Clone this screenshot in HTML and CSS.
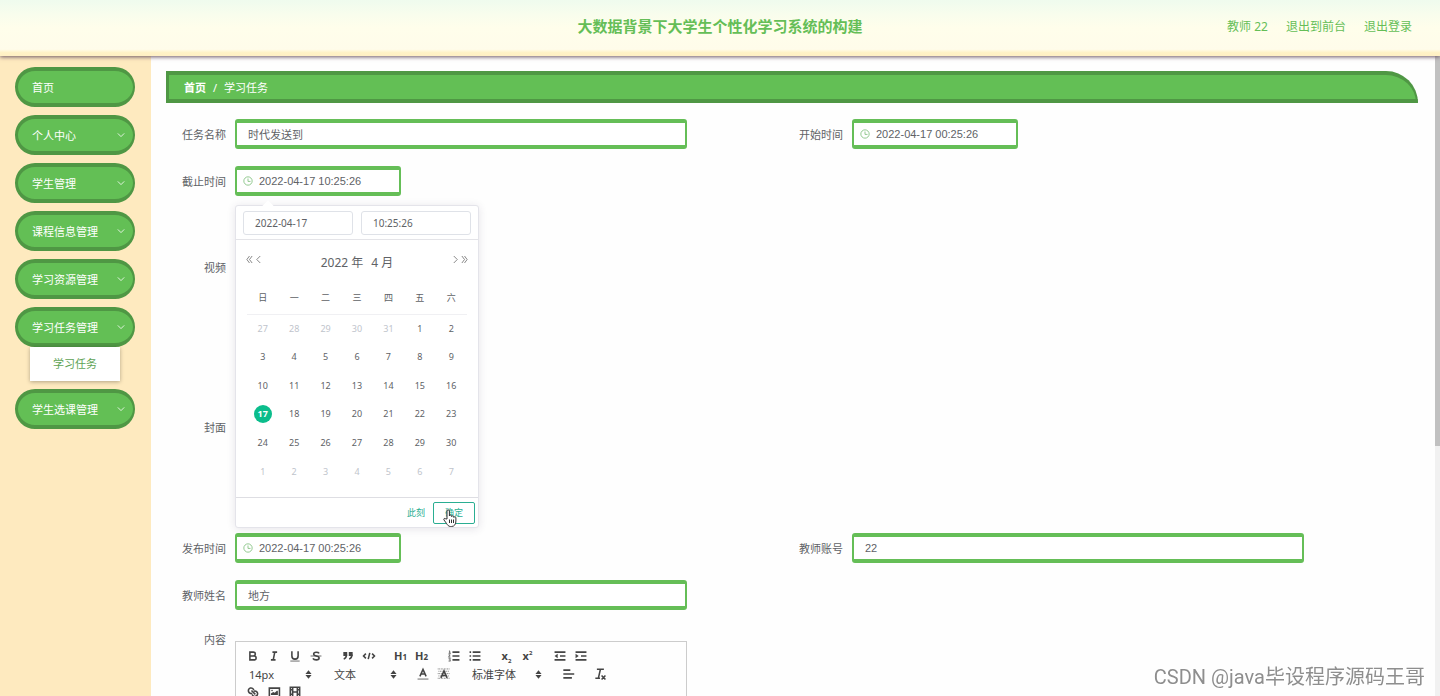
FILE: index.html
```html
<!DOCTYPE html>
<html lang="zh-CN">
<head>
    <meta charset="UTF-8">
    <meta name="viewport" content="width=device-width, initial-scale=1.0">
    <title>大数据背景下大学生个性化学习系统的构建</title>
    <link rel="stylesheet" href="styles.css">
</head>
<body>
    <!-- 公用图标 -->
    <svg class="sprite" aria-hidden="true">
        <symbol id="i-down" viewBox="0 0 10 10"><path d="M1 3l4 4 4-4"/></symbol>
        <symbol id="i-clock" viewBox="0 0 12 12"><circle cx="6" cy="6" r="5"/><path d="M6 3v3.5h3"/></symbol>
        <symbol id="i-sort" viewBox="0 0 18 18"><path d="M4 8l5-6 5 6zM4 10l5 6 5-6z"/></symbol>
    </svg>

    <header class="header">
        <h1>大数据背景下大学生个性化学习系统的构建</h1>
        <nav class="header-nav">
            <span>教师 22</span>
            <a href="#">退出到前台</a>
            <a href="#">退出登录</a>
        </nav>
    </header>

    <div class="layout">
        <aside class="sidebar">
            <a class="menu-item" href="#">首页</a>
            <button type="button" class="menu-item">个人中心<svg class="arrow"><use href="#i-down"/></svg></button>
            <button type="button" class="menu-item">学生管理<svg class="arrow"><use href="#i-down"/></svg></button>
            <button type="button" class="menu-item">课程信息管理<svg class="arrow"><use href="#i-down"/></svg></button>
            <button type="button" class="menu-item">学习资源管理<svg class="arrow"><use href="#i-down"/></svg></button>
            <div class="menu-group">
                <button type="button" class="menu-item">学习任务管理<svg class="arrow"><use href="#i-down"/></svg></button>
                <a class="submenu-item" href="#">学习任务</a>
            </div>
            <button type="button" class="menu-item">学生选课管理<svg class="arrow"><use href="#i-down"/></svg></button>
        </aside>

        <main class="main">
            <nav class="breadcrumb">
                <a href="#">首页</a><span class="sep">/</span><span>学习任务</span>
            </nav>

            <form class="form">
                <div class="field">
                    <label for="name">任务名称</label>
                    <input class="control" id="name" type="text" value="时代发送到">
                </div>
                <div class="field">
                    <label for="start">开始时间</label>
                    <div class="date-box">
                        <svg class="clock"><use href="#i-clock"/></svg>
                        <input class="control" id="start" type="text" value="2022-04-17 00:25:26">
                    </div>
                </div>

                <div class="field first">
                    <label for="end">截止时间</label>
                    <div class="date-box">
                        <svg class="clock"><use href="#i-clock"/></svg>
                        <input class="control" id="end" type="text" value="2022-04-17 10:25:26">

                        <div class="picker">
                            <div class="picker-inputs">
                                <input type="text" aria-label="日期" value="2022-04-17">
                                <input type="text" aria-label="时间" value="10:25:26">
                            </div>
                            <div class="picker-body">
                                <div class="picker-head">
                                    <button type="button" aria-label="前一年"><svg viewBox="0 0 8 10"><path d="M4 1L1 5l3 4M7 1L4 5l3 4"/></svg></button>
                                    <button type="button" aria-label="上个月"><svg viewBox="0 0 8 10"><path d="M6 1L2 5l4 4"/></svg></button>
                                    <span class="picker-title"><span>2022 年</span><span>4 月</span></span>
                                    <button type="button" aria-label="下个月"><svg viewBox="0 0 8 10"><path d="M2 1l4 4-4 4"/></svg></button>
                                    <button type="button" aria-label="后一年"><svg viewBox="0 0 8 10"><path d="M1 1l3 4-3 4M4 1l3 4-3 4"/></svg></button>
                                </div>
                                <table class="days">
                                    <thead>
                                        <tr><th>日</th><th>一</th><th>二</th><th>三</th><th>四</th><th>五</th><th>六</th></tr>
                                    </thead>
                                    <tbody>
                                        <tr><td class="off">27</td><td class="off">28</td><td class="off">29</td><td class="off">30</td><td class="off">31</td><td>1</td><td>2</td></tr>
                                        <tr><td>3</td><td>4</td><td>5</td><td>6</td><td>7</td><td>8</td><td>9</td></tr>
                                        <tr><td>10</td><td>11</td><td>12</td><td>13</td><td>14</td><td>15</td><td>16</td></tr>
                                        <tr><td><span class="current">17</span></td><td>18</td><td>19</td><td>20</td><td>21</td><td>22</td><td>23</td></tr>
                                        <tr><td>24</td><td>25</td><td>26</td><td>27</td><td>28</td><td>29</td><td>30</td></tr>
                                        <tr><td class="off">1</td><td class="off">2</td><td class="off">3</td><td class="off">4</td><td class="off">5</td><td class="off">6</td><td class="off">7</td></tr>
                                    </tbody>
                                </table>
                            </div>
                            <div class="picker-footer">
                                <button type="button" class="btn-now">此刻</button>
                                <button type="button" class="btn-ok">确定</button>
                            </div>
                            <svg class="cursor" viewBox="0 0 14 18"><path d="M4 10V2C4 .5 6.400 .5 6.400 2V7c0-1.200 2-1.200 2.200 0v.6c.2-1.100 2-1 2.200 .2v.6c.3-.9 2-.7 2.100 .4V12c0 3-1.400 5.500-4.400 5.500H7.500c-2 0-3-1.500-3.800-2.800L1 11c-.8-1.300 .8-2.200 1.700-1.200z"/><path d="M6.500 10.500V14M8.500 10.500V14M10.500 10.500V14"/></svg>
                        </div>
                    </div>
                </div>

                <div class="field wide video">
                    <label>视频</label>
                </div>
                <div class="field wide cover">
                    <label>封面</label>
                </div>

                <div class="field">
                    <label for="publish">发布时间</label>
                    <div class="date-box">
                        <svg class="clock"><use href="#i-clock"/></svg>
                        <input class="control" id="publish" type="text" value="2022-04-17 00:25:26">
                    </div>
                </div>
                <div class="field">
                    <label for="account">教师账号</label>
                    <input class="control" id="account" type="text" value="22">
                </div>

                <div class="field first">
                    <label for="teacher">教师姓名</label>
                    <input class="control" id="teacher" type="text" value="地方">
                </div>

                <div class="field first content">
                    <label for="editor">内容</label>
                    <div class="editor">
                        <div class="toolbar">
                            <span class="group">
                                <button type="button" aria-label="粗体"><svg viewBox="0 0 18 18"><path d="M5 4h4.500a2.500 2.500 0 0 1 0 5H5zM5 9h5.500a2.500 2.500 0 0 1 0 5H5z"/></svg></button>
                                <button type="button" aria-label="斜体"><svg viewBox="0 0 18 18"><path d="M7 4h6M5 14h6M8 14l2-10"/></svg></button>
                                <button type="button" aria-label="下划线"><svg viewBox="0 0 18 18"><path d="M5 3v6a4 4 0 0 0 8 0V3"/><path class="thin" d="M3 15.500h12"/></svg></button>
                                <button type="button" aria-label="删除线"><svg viewBox="0 0 18 18"><path class="thin" d="M2 9h14"/><path d="M13 5.500C12 3.800 6 3.300 6 6.300c0 3.500 7 1.700 7 5.200 0 3.200-6.500 3.200-8 .5"/></svg></button>
                            </span>
                            <span class="group">
                                <button type="button" aria-label="引用"><svg viewBox="0 0 18 18"><path class="fill" d="M3 4h5v5H3zM10 4h5v5h-5z"/><path d="M7 7c0 3-1 5-3.500 6M14 7c0 3-1 5-3.500 6"/></svg></button>
                                <button type="button" aria-label="代码"><svg viewBox="0 0 18 18"><path d="M5 6L2 9l3 3M13 6l3 3-3 3M10 5L8 13"/></svg></button>
                            </span>
                            <span class="group">
                                <button type="button" aria-label="标题1"><b>H<small>1</small></b></button>
                                <button type="button" aria-label="标题2"><b>H<small>2</small></b></button>
                            </span>
                            <span class="group">
                                <button type="button" aria-label="有序列表"><svg viewBox="0 0 18 18"><path d="M7 4h9M7 9h9M7 14h9"/><path class="thin" d="M2.500 2.500h1v3M2 5.500h3M2 7.500h2l-2 3h2.500M2 12.500h2.500l-1 1.500 1 1.500H2"/></svg></button>
                                <button type="button" aria-label="无序列表"><svg viewBox="0 0 18 18"><path d="M6 4h10M6 9h10M6 14h10M2 4h2M2 9h2M2 14h2"/></svg></button>
                            </span>
                            <span class="group">
                                <button type="button" aria-label="下标"><b>x<sub>2</sub></b></button>
                                <button type="button" aria-label="上标"><b>x<sup>2</sup></b></button>
                            </span>
                            <span class="group">
                                <button type="button" aria-label="减少缩进"><svg viewBox="0 0 18 18"><path d="M2 4h14M9 9h7M2 14h14"/><path class="fill" d="M6 6v6L2 9z"/></svg></button>
                                <button type="button" aria-label="增加缩进"><svg viewBox="0 0 18 18"><path d="M2 4h14M9 9h7M2 14h14"/><path class="fill" d="M2 6v6l4-3z"/></svg></button>
                            </span>
                            <span class="group select">
                                <select aria-label="字号"><option>14px</option></select>
                                <svg class="sort"><use href="#i-sort"/></svg>
                            </span>
                            <span class="group select">
                                <select aria-label="标题"><option>文本</option></select>
                                <svg class="sort"><use href="#i-sort"/></svg>
                            </span>
                            <span class="group">
                                <button type="button" aria-label="文字颜色"><svg viewBox="0 0 18 18"><path class="thin" d="M2 15.500h14"/><path d="M5 12l4-9 4 9M6.500 9h5"/></svg></button>
                                <button type="button" aria-label="背景颜色"><svg viewBox="0 0 18 18"><path class="dots" d="M1 2.500h16M2 5.500h14M1 8.500h16M2 11.500h14M1 14.500h16"/><path d="M5 14l4-9 4 9M6.500 11h5"/></svg></button>
                            </span>
                            <span class="group select font">
                                <select aria-label="字体"><option>标准字体</option></select>
                                <svg class="sort"><use href="#i-sort"/></svg>
                            </span>
                            <span class="group">
                                <button type="button" aria-label="对齐"><svg viewBox="0 0 18 18"><path d="M3 4h9M3 9h14M3 14h11"/></svg></button>
                            </span>
                            <span class="group">
                                <button type="button" aria-label="清除格式"><svg viewBox="0 0 18 18"><path d="M5 3h9M9.500 3L7 14M3 14.500h6M11 11l5 5M16 11l-5 5"/></svg></button>
                            </span>
                            <span class="group">
                                <button type="button" aria-label="链接"><svg viewBox="0 0 18 18"><path d="M7 7l5 5M8 10.500a3.500 3.500 0 1 1 2-4M10 8a3.500 3.500 0 1 1-2 4"/></svg></button>
                                <button type="button" aria-label="图片"><svg viewBox="0 0 18 18"><path d="M3 4h13v11H3z"/><path class="fill" d="M5 13v-2l3-2 2 1 3-3 1 1v5z"/><circle class="fill" cx="6.500" cy="7" r="1"/></svg></button>
                                <button type="button" aria-label="视频"><svg viewBox="0 0 18 18"><path d="M3 3h12v12H3zM6 3v12M12 3v12M6 9h6M3 6h3M3 12h3M12 6h3M12 12h3"/></svg></button>
                            </span>
                        </div>
                        <textarea id="editor"></textarea>
                    </div>
                </div>
            </form>
        </main>

        <div class="scrollbar"><div class="thumb"></div></div>
    </div>

    <div class="watermark">CSDN @java毕设程序源码王哥</div>
</body>
</html>
```
FILE: styles.css
```css
* {
    margin: 0;
    padding: 0;
    box-sizing: border-box;
}

body {
    font-family: "Noto Sans", "Noto Sans CJK SC", sans-serif;
    font-size: 11px;
    color: #606266;
    background: #fefefe;
    height: 100vh;
    display: flex;
    flex-direction: column;
    overflow: hidden;
}

input, button, select, textarea {
    font: inherit;
    color: inherit;
    background: none;
    border: none;
    outline: none;
}

a {
    color: inherit;
    text-decoration: none;
}

svg {
    fill: none;
    stroke: currentColor;
}

.sprite {
    position: absolute;
    width: 0;
    height: 0;
}

/* 顶部 */
.header {
    display: grid;
    grid-template-columns: 1fr auto 1fr;
    align-items: center;
    flex-shrink: 0;
    height: 56px;
    padding: 0 28px 4px;
    color: #65be57;
    background: linear-gradient(#effbee 0%, #f8fded 25%, #fffeeb 50%, #fffcea 88%, #fff2c6 94%, #fff0c4 100%);
    box-shadow: 0 1px 4px #6b5564;
    z-index: 2;
}

.header h1 {
    grid-column: 2;
    font-size: 15px;
    line-height: 20px;
}

.header-nav {
    display: flex;
    justify-content: flex-end;
    gap: 18px;
    font-size: 12px;
}

.layout {
    flex: 1;
    min-height: 0;
    display: flex;
}

/* 左侧菜单 */
.sidebar {
    width: 151px;
    flex-shrink: 0;
    padding: 11px 16px 0 15px;
    background: #feeabf;
    display: flex;
    flex-direction: column;
    gap: 8px;
}

.menu-item {
    display: flex;
    align-items: center;
    justify-content: space-between;
    flex-shrink: 0;
    width: 100%;
    height: 40px;
    padding: 0 8px 0 14px;
    color: #fff;
    background: #63bf55;
    border: 3px solid #4f9744;
    border-width: 4px 2px 4px 3px;
    border-radius: 20px;
    cursor: pointer;
}

.arrow {
    width: 8px;
    height: 8px;
}

.submenu-item {
    display: block;
    margin: 0 15px;
    line-height: 34px;
    text-align: center;
    color: #5ea354;
    background: #fff;
    box-shadow: 0 1px 4px rgba(0,0,0,0.3);
}

/* 内容区 */
.main {
    flex: 1;
    min-width: 0;
    padding: 15px 17px 0 15px;
    overflow: hidden;
}

.breadcrumb {
    display: flex;
    align-items: center;
    height: 32px;
    padding-left: 15px;
    color: #fff;
    background: #63bf55;
    border: 3px solid #4f9744;
    border-width: 4px 2px 4px 3px;
    border-radius: 0 32px 0 0;
}

.breadcrumb a {
    font-weight: bold;
}

.breadcrumb .sep {
    margin: 0 7px;
}

.form {
    display: grid;
    grid-template-columns: 1fr 1fr;
    row-gap: 17px;
    padding: 16px 18px 0 0;
}

.field {
    display: flex;
    align-items: center;
    min-height: 30px;
    padding-right: 96px;
}

.field.first {
    grid-column: 1;
}

.field.wide {
    grid-column: 1 / 3;
}

.field.video {
    height: 108px;
}

.field.cover {
    height: 178px;
}

.field label {
    width: 69px;
    flex-shrink: 0;
    padding-right: 9px;
    text-align: right;
    white-space: nowrap;
}

.control {
    flex: 1;
    min-width: 0;
    width: 100%;
    height: 30px;
    padding: 0 11px;
    font-family: "Liberation Sans", "Noto Sans CJK SC", sans-serif;
    background: #fff;
    border: 4px solid #65be57;
    border-width: 4px 2px;
    border-radius: 3px;
}

.date-box {
    position: relative;
    width: 166px;
}

.date-box .control {
    display: block;
    padding-left: 22px;
}

.clock {
    position: absolute;
    left: 8px;
    top: 10px;
    width: 10px;
    height: 10px;
    color: #7fbf7c;
}

/* 日期选择面板 */
.picker {
    position: absolute;
    top: 39px;
    left: 0;
    width: 244px;
    background: #fff;
    border: 1px solid #e4e4ea;
    border-radius: 3px;
    box-shadow: 0 1px 8px rgba(60,40,80,0.12);
    z-index: 1;
}

.picker::before {
    content: "";
    position: absolute;
    left: 28px;
    top: -4px;
    width: 8px;
    height: 8px;
    background: #fff;
    transform: rotate(45deg);
}

.picker-inputs {
    position: relative;
    display: flex;
    gap: 8px;
    padding: 5px 7px 4px;
    border-bottom: 1px solid #e4e4e8;
}

.picker-inputs input {
    flex: 1;
    min-width: 0;
    height: 24px;
    padding: 0 11px;
    font-size: 10px;
    border: 1px solid #dfe2e8;
    border-radius: 3px;
}

.picker-body {
    padding: 8px 11px 11px;
}

.picker-head {
    display: flex;
    align-items: flex-start;
    height: 35px;
    margin: 0 -2px;
}

.picker-head button {
    width: 9px;
    height: 22px;
    color: #777;
}

.picker-head svg {
    width: 7px;
    height: 9px;
}

.picker-title {
    flex: 1;
    display: flex;
    justify-content: center;
    gap: 8px;
    font-size: 12px;
    line-height: 30px;
}

.days {
    width: 220px;
    height: 203px;
    table-layout: fixed;
    border-collapse: collapse;
    font-size: 9px;
    line-height: 18px;
    text-align: center;
}

.days th {
    height: 31px;
    font-weight: normal;
    border-bottom: 1px solid #f0f0f3;
}

.days td {
    height: 28px;
}

.days .off {
    color: #c0c4cc;
}

.days .current {
    display: block;
    width: 18px;
    margin: 0 auto;
    color: #fff;
    font-weight: bold;
    background: #0bbd8c;
    border-radius: 50%;
}

.picker-footer {
    display: flex;
    justify-content: flex-end;
    align-items: center;
    gap: 8px;
    height: 30px;
    padding-right: 3px;
    font-size: 9px;
    color: #2aae92;
    border-top: 1px solid #dedee3;
}

.btn-ok {
    width: 42px;
    height: 22px;
    border: 1px solid #2aae92;
    border-radius: 2px;
}

.cursor {
    position: absolute;
    right: 21px;
    bottom: 0;
    width: 14px;
    height: 18px;
    fill: #fff;
    stroke: #333;
}

/* 富文本编辑器 */
.field.content {
    align-items: flex-start;
}

.content label {
    line-height: 26px;
}

.editor {
    flex: 1;
    margin-top: 14px;
    border: 1px solid #ccc;
}

.toolbar {
    display: flex;
    flex-wrap: wrap;
    padding: 5px 6px;
    color: #444;
}

.group {
    display: flex;
    align-items: center;
    height: 18px;
    margin-right: 11px;
}

.group button {
    display: flex;
    align-items: center;
    justify-content: center;
    width: 21px;
    height: 18px;
    line-height: 18px;
}

.group button svg {
    width: 14px;
    height: 14px;
    stroke-width: 2;
}

.group .thin {
    stroke-width: 1;
}

.group .fill {
    fill: #444;
    stroke: none;
}

.group .dots {
    stroke-width: 1;
    stroke-dasharray: 1 1;
}

.group small {
    font-size: 8px;
}

.group sub, .group sup {
    font-size: 6px;
    line-height: 6px;
}

.group.select {
    position: relative;
    width: 74px;
}

.group.font {
    width: 81px;
}

.group select {
    width: 100%;
    padding-left: 7px;
    appearance: none;
}

.group .sort {
    position: absolute;
    right: 2px;
    top: 4px;
    width: 11px;
    height: 11px;
    fill: #444;
    stroke: none;
    pointer-events: none;
}

.editor textarea {
    display: block;
    width: 100%;
    height: 200px;
    border-top: 1px solid #ccc;
    resize: none;
}

/* 滚动条 */
.scrollbar {
    width: 5px;
    flex-shrink: 0;
    background: #f1f1f1;
}

.thumb {
    height: 61%;
    background: #c1c1c1;
}

.watermark {
    position: fixed;
    right: 15px;
    bottom: 5px;
    font-family: Roboto, "Noto Sans CJK SC", sans-serif;
    font-size: 20px;
    line-height: 28px;
    color: #8e8e8e;
    text-shadow: 1px 1px 0 #fff;
    z-index: 3;
}
```
